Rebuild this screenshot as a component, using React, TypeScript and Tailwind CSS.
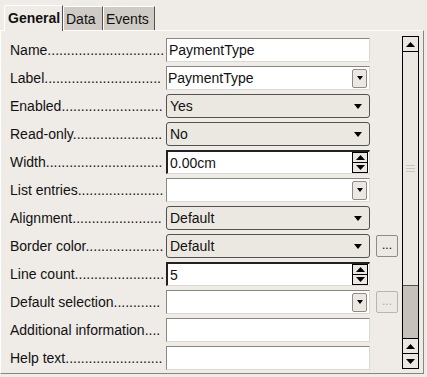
import React from "react";

const TriDown = ({ w = 8, h = 5 }: { w?: number; h?: number }) => (
  <svg width={w} height={h} viewBox={`0 0 ${w} ${h}`}>
    <polygon points={`0,0 ${w},0 ${w / 2},${h}`} fill="#000" />
  </svg>
);
const TriUp = ({ w = 8, h = 5 }: { w?: number; h?: number }) => (
  <svg width={w} height={h} viewBox={`0 0 ${w} ${h}`}>
    <polygon points={`0,${h} ${w},${h} ${w / 2},0`} fill="#000" />
  </svg>
);

const TextField = ({ value = "" }: { value?: string }) => (
  <div className="w-[204px] h-[24px] bg-white border border-t-[#8a8680] border-l-[#8a8680] border-r-[#dcd8d2] border-b-[#dcd8d2] flex items-center pl-[2px]">
    {value}
  </div>
);

const Combo = ({ value = "" }: { value?: string }) => (
  <div className="w-[204px] h-[24px] bg-white border border-t-[#8a8680] border-l-[#8a8680] border-r-[#dcd8d2] border-b-[#dcd8d2] flex items-center">
    <span className="flex-1 pl-[1px]">{value}</span>
    <div className="w-[15px] h-[19px] mr-[2px] bg-[#ebe8e3] border border-[#8f8b85] rounded-[2px] flex flex-col items-center justify-center">
      <TriDown w={6} h={4} />
    </div>
  </div>
);

const ListBox = ({ value }: { value: string }) => (
  <div className="w-[204px] h-[24px] bg-[#ebe8e2] border border-[#55524d] rounded-[3px] flex items-center pl-[3px] pr-[7px]">
    <span className="flex-1">{value}</span>
    <TriDown w={8} h={5} />
  </div>
);

const Spin = ({ value }: { value: string }) => (
  <div className="w-[204px] h-[24px] bg-white border-t-2 border-l-2 border-t-[#222] border-l-[#222] border-r border-b border-r-[#dcd8d2] border-b-[#dcd8d2] flex items-center">
    <span className="flex-1 pl-[2px]">{value}</span>
    <div className="w-[16px] h-[21px] mr-[1px] border border-black flex flex-col">
      <div className="flex-1 bg-[#ebe8e3] flex items-center justify-center border-b border-black">
        <TriUp w={9} h={5} />
      </div>
      <div className="flex-1 bg-[#ebe8e3] flex items-center justify-center">
        <TriDown w={9} h={5} />
      </div>
    </div>
  </div>
);

const DotsButton = ({ disabled = false }: { disabled?: boolean }) => (
  <div
    className={`ml-[6px] w-[22px] h-[22px] border rounded-[2px] flex items-center justify-center text-[12px] leading-[14px] pb-[2px] ${
      disabled
        ? "border-[#b9b5ae] text-[#b0aca5] bg-[#ece9e4]"
        : "border-[#8f8b85] text-black bg-[#ece9e4]"
    }`}
  >
    ...
  </div>
);

const Row = ({
  label,
  dots,
  children,
}: {
  label: string;
  dots: number;
  children: React.ReactNode;
}) => (
  <div className="flex items-center h-[24px] shrink-0">
    <div className="w-[156px] whitespace-nowrap">
      {label}
      {".".repeat(dots)}
    </div>
    {children}
  </div>
);

export default function App() {
  return (
    <div className="w-[427px] h-[377px] bg-[#efebe7] overflow-hidden font-['Liberation_Sans',Arial,sans-serif] text-[14px] text-[#111] leading-[16px]">
      <div className="flex items-end h-[30px] pl-[4px]">
        <div className="h-[26px] w-[59px] bg-[#efebe7] border-t border-l border-white border-r border-r-[#55524d] rounded-tl-[2px] font-bold flex items-center pl-[3px] relative z-10 -mb-[1px] pb-[1px]">
          General
        </div>
        <div className="h-[24px] w-[40px] bg-[#cfcbc4] border-t border-l border-white border-r border-r-[#55524d] rounded-tl-[2px] flex items-center pl-[2px]">
          Data
        </div>
        <div className="h-[24px] w-[52px] bg-[#cfcbc4] border-t border-l border-white border-r border-r-[#55524d] rounded-tl-[2px] flex items-center pl-[2px]">
          Events
        </div>
      </div>
      <div className="w-[424px] h-[344px] border border-t-white border-l-white border-r-[#8a867f] border-b-[#8a867f] flex">
        <div className="flex-1 overflow-hidden pl-[9px] pt-[7px] flex flex-col gap-[4px]">
          <Row label="Name" dots={30}>
            <TextField value="PaymentType" />
          </Row>
          <Row label="Label" dots={30}>
            <Combo value="PaymentType" />
          </Row>
          <Row label="Enabled" dots={26}>
            <ListBox value="Yes" />
          </Row>
          <Row label="Read-only" dots={23}>
            <ListBox value="No" />
          </Row>
          <Row label="Width" dots={30}>
            <Spin value="0.00cm" />
          </Row>
          <Row label="List entries" dots={22}>
            <Combo />
          </Row>
          <Row label="Alignment" dots={23}>
            <ListBox value="Default" />
          </Row>
          <Row label="Border color" dots={20}>
            <ListBox value="Default" />
            <DotsButton />
          </Row>
          <Row label="Line count" dots={23}>
            <Spin value="5" />
          </Row>
          <Row label="Default selection" dots={12}>
            <Combo />
            <DotsButton disabled />
          </Row>
          <Row label="Additional information" dots={4}>
            <TextField />
          </Row>
          <Row label="Help text" dots={25}>
            <TextField />
          </Row>
        </div>
        <div className="w-[17px] mr-[4px] mt-[5px] mb-[4px] border border-black flex flex-col">
          <div className="h-[15px] border-b border-black bg-[#ebe8e3] flex items-center justify-center">
            <TriUp w={9} h={5} />
          </div>
          <div className="h-[234px] bg-[#ebe8e3] border-b border-[#55524d] flex flex-col items-center justify-center gap-[2px]">
            <div className="w-[9px] h-px bg-[#c9c5be]" />
            <div className="w-[9px] h-px bg-[#c9c5be]" />
            <div className="w-[9px] h-px bg-[#c9c5be]" />
          </div>
          <div className="flex-1 bg-[#c6c2bb]" />
          <div className="h-[15px] border-t border-black bg-[#ebe8e3] flex items-center justify-center">
            <TriUp w={9} h={5} />
          </div>
          <div className="h-[15px] border-t border-black bg-[#ebe8e3] flex items-center justify-center">
            <TriDown w={9} h={5} />
          </div>
        </div>
      </div>
    </div>
  );
}
